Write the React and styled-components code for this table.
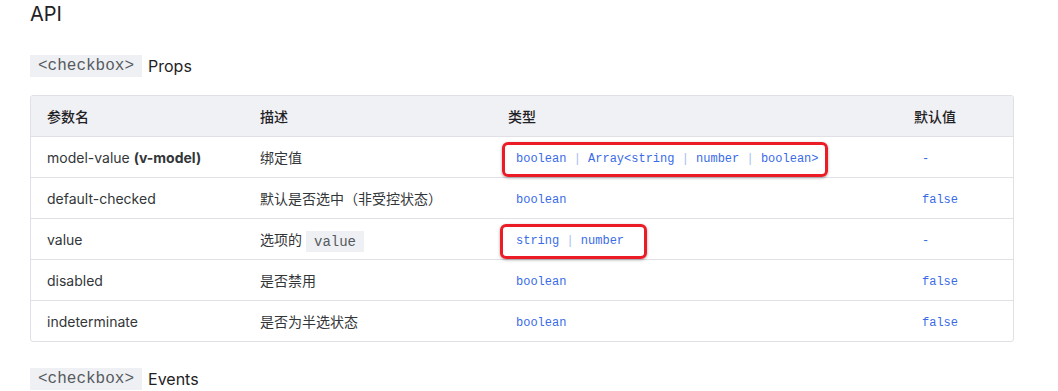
import React from "react";
import styled, { createGlobalStyle } from "styled-components";

const GlobalStyle = createGlobalStyle`
    body {
        margin: 0;
        background: #fff;
        font-family: Inter, "Noto Sans CJK SC", sans-serif;
        color: #333639;
    }
`

const Page = styled.main`
    padding: 0 44px 0 30px;
`

const Title = styled.h2`
    margin: 0;
    font-size: 20px;
    line-height: 28px;
    font-weight: 400;
    color: #1f2225;
`

const SubTitle = styled.h3`
    display: flex;
    align-items: center;
    gap: 6px;
    margin: ${p => p.$top}px 0 0;
    height: 22px;
    font-size: 16px;
    font-weight: 400;
    color: #1f2225;
`

const Tag = styled.code`
    display: inline-block;
    height: 22px;
    line-height: 22px;
    padding: 0 8px;
    background: #eff0f3;
    font-family: "Liberation Mono", monospace;
    font-size: 16px;
    color: #555a60;
`

const InlineCode = styled.code`
    padding: 2.5px 8px;
    margin-left: 4px;
    background: #eff0f3;
    font-family: "Liberation Mono", monospace;
    font-size: 14px;
    color: #555a60;
`

const TableBox = styled.div`
    margin-top: 18px;
    border: 1px solid #e0e0e6;
    border-radius: 3px;
    overflow: hidden;
`

const Table = styled.table`
    width: 100%;
    border-collapse: collapse;
    table-layout: fixed;
    font-size: 14px;
`

const Th = styled.th`
    height: 40px;
    padding: 0 16px;
    text-align: left;
    font-weight: 500;
    color: #1f2225;
    background: #f0f1f4;
    border-bottom: 1px solid #e0e0e6;
`

const Td = styled.td`
    height: 40px;
    padding: 0 16px;
    border-bottom: 1px solid #e0e0e6;
    white-space: nowrap;

    tr:last-child > & {
        border-bottom: none;
    }
`

const Type = styled.code`
    position: relative;
    padding: 0 8px;
    font-family: "Liberation Mono", monospace;
    font-size: 12px;
    color: #3a6be6;

    &::after {
        content: '';
        display: ${p => (p.$mark ? "block" : "none")};
        position: absolute;
        top: -10px;
        bottom: -11px;
        left: ${p => -(p.$l || 0)}px;
        right: ${p => -(p.$r || 0)}px;
        border: 3px solid #ec1c27;
        border-radius: 6px;
        box-shadow: 0 1px 3px rgba(0, 0, 0, .35);
    }
`

const Pipe = styled.span`
    color: #a9bdf0;
`

const TypeText = ({ text, ...rest }) => {
    const parts = text.split(" | ");
    return (
        <Type {...rest}>
            {parts.map((p, i) => (
                <React.Fragment key={i}>
                    {i > 0 && <> <Pipe>|</Pipe> </>}
                    {p}
                </React.Fragment>
            ))}
        </Type>
    )
}

const rows = [
    { name: <>model-value <b>(v-model)</b></>, desc: "绑定值", type: "boolean | Array<string | number | boolean>", def: "-", mark: { l: 6, r: 1 } },
    { name: "default-checked", desc: "默认是否选中（非受控状态）", type: "boolean", def: "false" },
    { name: "value", desc: <>选项的<InlineCode>value</InlineCode></>, type: "string | number", def: "-", mark: { l: 8, r: 15 } },
    { name: "disabled", desc: "是否禁用", type: "boolean", def: "false" },
    { name: "indeterminate", desc: "是否为半选状态", type: "boolean", def: "false" },
]

const App = () => {
    return (
        <>
            <GlobalStyle />
            <Page>
                <Title>API</Title>

                <SubTitle $top={27}>
                    <Tag>&lt;checkbox&gt;</Tag>
                    <span>Props</span>
                </SubTitle>

                <TableBox>
                    <Table>
                        <colgroup>
                            <col style={{ width: 213 }} />
                            <col style={{ width: 248 }} />
                            <col style={{ width: 406 }} />
                            <col />
                        </colgroup>
                        <thead>
                            <tr>
                                <Th>参数名</Th>
                                <Th>描述</Th>
                                <Th>类型</Th>
                                <Th>默认值</Th>
                            </tr>
                        </thead>
                        <tbody>
                            {rows.map((r, i) => (
                                <tr key={i}>
                                    <Td>{r.name}</Td>
                                    <Td>{r.desc}</Td>
                                    <Td>
                                        <TypeText text={r.type} $mark={!!r.mark} $l={r.mark?.l} $r={r.mark?.r} />
                                    </Td>
                                    <Td><Type>{r.def}</Type></Td>
                                </tr>
                            ))}
                        </tbody>
                    </Table>
                </TableBox>

                <SubTitle $top={26}>
                    <Tag>&lt;checkbox&gt;</Tag>
                    <span>Events</span>
                </SubTitle>
            </Page>
        </>
    )
}

export default App;
